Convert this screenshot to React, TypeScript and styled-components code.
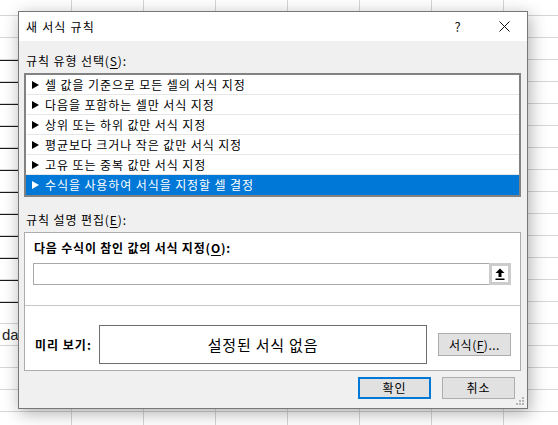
import React from 'react';
import styled, { createGlobalStyle } from 'styled-components';

const GlobalStyle = createGlobalStyle`
  html, body {
    margin: 0;
    padding: 0;
    width: 558px;
    height: 425px;
    overflow: hidden;
    background: #ffffff;
  }
  * {
    box-sizing: border-box;
  }
`;

const FONT = `"Noto Sans CJK KR", "Noto Sans", sans-serif`;

// the worksheet behind the dialog
const Sheet = styled.div`
  position: relative;
  width: 558px;
  height: 425px;
  background-color: #fff;
  background-image:
    repeating-linear-gradient(to bottom, transparent 0 21px, #1a1a1a 21px 22px),
    repeating-linear-gradient(to bottom, transparent 0 21px, #d6d6d6 21px 22px),
    repeating-linear-gradient(to right, transparent 0 71px, #d6d6d6 71px 72px);
  background-size: 71px 264px, 100% 100%, 100% 100%;
  background-position: 0 39px, 0 -6px, 0 0;
  background-repeat: no-repeat, repeat, repeat;
  font-family: ${FONT};
`;

const CellText = styled.div`
  padding: 325px 0 0 2px;
  font-family: "Liberation Sans", Arial, sans-serif;
  font-size: 15px;
  line-height: 20px;
  color: #222;
`;

const Dialog = styled.div`
  position: absolute;
  left: 18px;
  top: 11px;
  width: 510px;
  height: 398px;
  display: flex;
  flex-direction: column;
  background: #f0f0f0;
  border: 1px solid #777;
  box-shadow: 2px 4px 16px rgba(0, 0, 0, 0.32);
  font-family: ${FONT};
  font-size: 12px;
  letter-spacing: 0.9px;
  color: #000;
`;

const TitleBar = styled.div`
  height: 29px;
  flex: none;
  display: flex;
  align-items: center;
  background: #fff;
  padding-left: 7px;
`;

const Title = styled.div`
  flex: 1;
  font-size: 12px;
  line-height: 16px;
  letter-spacing: 1.2px;
`;

const TitleButton = styled.div<{ $w: number }>`
  width: ${({ $w }) => $w}px;
  height: 29px;
  display: flex;
  align-items: center;
  justify-content: center;
  font-size: 13px;
  color: #111;
`;

const Body = styled.div`
  flex: 1;
  display: flex;
  flex-direction: column;
  padding: 12px 6px 0 5px;
`;

const Label = styled.div<{ $top?: number }>`
  line-height: 16px;
  margin-top: ${({ $top }) => $top ?? 0}px;
  padding-left: 2px;
`;

const BoldLabel = styled.div`
  font-weight: 700;
  line-height: 16px;
  padding-left: 1px;
  letter-spacing: 0.8px;
`;

const Key = styled.span`
  text-decoration: underline;
  text-underline-offset: 2px;
`;

const List = styled.div`
  margin-top: 4px;
  height: 124px;
  border: 2px solid #828282;
  background: #fff;
  display: flex;
  flex-direction: column;
`;

const Item = styled.div<{ $selected?: boolean }>`
  height: 20px;
  flex: none;
  display: flex;
  align-items: center;
  gap: 6px;
  padding-left: 6px;
  border-bottom: 1px solid ${({ $selected }) => ($selected ? '#0078d7' : '#e6e6e6')};
  background: ${({ $selected }) => ($selected ? '#0078d7' : '#fff')};
  color: ${({ $selected }) => ($selected ? '#fff' : '#000')};
  line-height: 16px;
  white-space: nowrap;
`;

const Triangle = styled.span`
  width: 0;
  height: 0;
  border-left: 7px solid currentColor;
  border-top: 4px solid transparent;
  border-bottom: 4px solid transparent;
`;

const Group = styled.div`
  margin-top: 4px;
  height: 139px;
  border: 1px solid #adadad;
  background: #fff;
  display: flex;
  flex-direction: column;
  padding-top: 7px;
`;

const GroupTop = styled.div`
  padding: 0 9px 0 8px;
  display: flex;
  flex-direction: column;
  gap: 7px;
`;

const InputRow = styled.div`
  height: 22px;
  display: flex;
`;

const Input = styled.div`
  flex: 1;
  border: 1px solid #a9a9a9;
  border-right: none;
  background: #fff;
`;

const CollapseButton = styled.div`
  width: 22px;
  height: 22px;
  border: 3px solid #cccccc;
  background: #fff;
  display: flex;
  align-items: center;
  justify-content: center;
`;

const Divider = styled.div`
  margin-top: 20px;
  height: 1px;
  background: #c6c6c6;
`;

const PreviewRow = styled.div`
  margin-top: 19px;
  padding: 0 9px 0 10px;
  display: flex;
  align-items: center;
`;

const PreviewLabel = styled.div`
  width: 64px;
  font-weight: 700;
  line-height: 16px;
  letter-spacing: 1px;
`;

const PreviewBox = styled.div`
  width: 328px;
  height: 39px;
  border: 1px solid #6e6e6e;
  display: flex;
  align-items: center;
  justify-content: center;
  font-size: 15px;
  letter-spacing: 0.8px;
  color: #000;
`;

const Button = styled.div<{ $default?: boolean; $w?: number }>`
  width: ${({ $w }) => $w ?? 73}px;
  height: 22px;
  display: flex;
  align-items: center;
  justify-content: center;
  background: #e1e1e1;
  border: ${({ $default }) => ($default ? '2px solid #0078d7' : '1px solid #adadad')};
  line-height: 16px;
  color: #000;
`;

const FormatButton = styled(Button)`
  margin-left: auto;
  height: 23px;
  letter-spacing: 0.5px;
`;

const Footer = styled.div`
  margin-top: 6px;
  display: flex;
  justify-content: flex-end;
  gap: 11px;
  padding-right: 6px;
`;

const Grip = styled.svg`
  position: absolute;
  right: 2px;
  bottom: 2px;
`;

const rules = [
  '셀 값을 기준으로 모든 셀의 서식 지정',
  '다음을 포함하는 셀만 서식 지정',
  '상위 또는 하위 값만 서식 지정',
  '평균보다 크거나 작은 값만 서식 지정',
  '고유 또는 중복 값만 서식 지정',
  '수식을 사용하여 서식을 지정할 셀 결정',
];

export default function App() {
  return (
    <>
      <GlobalStyle />
      <Sheet>
        <CellText>da</CellText>
        <Dialog>
          <TitleBar>
            <Title>새 서식 규칙</Title>
            <TitleButton $w={46}>?</TitleButton>
            <TitleButton $w={46}>
              <svg width="11" height="11" viewBox="0 0 11 11">
                <path d="M0.5 0.5 L10.5 10.5 M10.5 0.5 L0.5 10.5" stroke="#111" strokeWidth="1" fill="none" />
              </svg>
            </TitleButton>
          </TitleBar>
          <Body>
            <Label>
              규칙 유형 선택(<Key>S</Key>):
            </Label>
            <List>
              {rules.map((r, i) => (
                <Item key={r} $selected={i === rules.length - 1}>
                  <Triangle />
                  {r}
                </Item>
              ))}
            </List>
            <Label $top={15}>
              규칙 설명 편집(<Key>E</Key>):
            </Label>
            <Group>
              <GroupTop>
                <BoldLabel>
                  다음 수식이 참인 값의 서식 지정(<Key>O</Key>):
                </BoldLabel>
                <InputRow>
                  <Input />
                  <CollapseButton>
                    <svg width="10" height="12" viewBox="0 0 10 12">
                      <path d="M5 0.5 L9.5 5 L6.5 5 L6.5 9 L3.5 9 L3.5 5 L0.5 5 Z" fill="#000" />
                      <rect x="0.5" y="10.5" width="9" height="1.5" fill="#000" />
                    </svg>
                  </CollapseButton>
                </InputRow>
              </GroupTop>
              <Divider />
              <PreviewRow>
                <PreviewLabel>미리 보기:</PreviewLabel>
                <PreviewBox>설정된 서식 없음</PreviewBox>
                <FormatButton>
                  서식(<Key>F</Key>)...
                </FormatButton>
              </PreviewRow>
            </Group>
            <Footer>
              <Button $default>확인</Button>
              <Button>취소</Button>
            </Footer>
          </Body>
          <Grip width="9" height="9" viewBox="0 0 9 9">
            <rect x="6" y="0" width="2" height="2" fill="#b5b5b5" />
            <rect x="3" y="3" width="2" height="2" fill="#b5b5b5" />
            <rect x="6" y="3" width="2" height="2" fill="#b5b5b5" />
            <rect x="0" y="6" width="2" height="2" fill="#b5b5b5" />
            <rect x="3" y="6" width="2" height="2" fill="#b5b5b5" />
            <rect x="6" y="6" width="2" height="2" fill="#b5b5b5" />
          </Grip>
        </Dialog>
      </Sheet>
    </>
  );
}
